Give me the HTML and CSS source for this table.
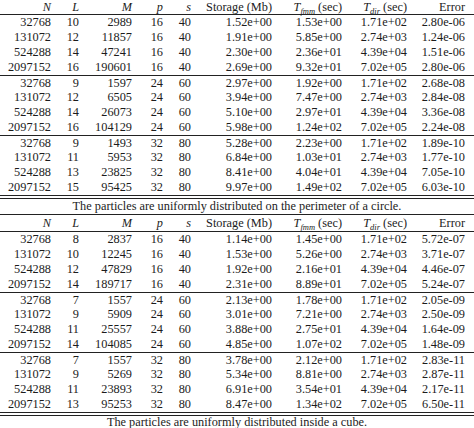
FILE: index.html
```html
<!DOCTYPE html>
<html>
<head>
<meta charset="utf-8">
<link rel="stylesheet" href="styles.css">
</head>
<body>
<div class="page">
  <section class="block first">
    <table class="data">
      <colgroup>
        <col class="c-n"><col class="c-l"><col class="c-m"><col class="c-p"><col class="c-s">
        <col class="c-st"><col class="c-tf"><col class="c-td"><col class="c-err">
      </colgroup>
      <thead>
        <tr><th><i>N</i></th><th><i>L</i></th><th><i>M</i></th><th><i>p</i></th><th><i>s</i></th><th>Storage (Mb)</th><th><i>T<sub>fmm</sub></i> (sec)</th><th><i>T<sub>dir</sub></i> (sec)</th><th>Error</th></tr>
      </thead>
      <tbody>
        <tr><td>32768</td><td>10</td><td>2989</td><td>16</td><td>40</td><td>1.52e+00</td><td>1.53e+00</td><td>1.71e+02</td><td>2.80e-06</td></tr>
        <tr><td>131072</td><td>12</td><td>11857</td><td>16</td><td>40</td><td>1.91e+00</td><td>5.85e+00</td><td>2.74e+03</td><td>1.24e-06</td></tr>
        <tr><td>524288</td><td>14</td><td>47241</td><td>16</td><td>40</td><td>2.30e+00</td><td>2.36e+01</td><td>4.39e+04</td><td>1.51e-06</td></tr>
        <tr><td>2097152</td><td>16</td><td>190601</td><td>16</td><td>40</td><td>2.69e+00</td><td>9.32e+01</td><td>7.02e+05</td><td>2.80e-06</td></tr>
      </tbody>
      <tbody>
        <tr><td>32768</td><td>9</td><td>1597</td><td>24</td><td>60</td><td>2.97e+00</td><td>1.92e+00</td><td>1.71e+02</td><td>2.68e-08</td></tr>
        <tr><td>131072</td><td>12</td><td>6505</td><td>24</td><td>60</td><td>3.94e+00</td><td>7.47e+00</td><td>2.74e+03</td><td>2.84e-08</td></tr>
        <tr><td>524288</td><td>14</td><td>26073</td><td>24</td><td>60</td><td>5.10e+00</td><td>2.97e+01</td><td>4.39e+04</td><td>3.36e-08</td></tr>
        <tr><td>2097152</td><td>16</td><td>104129</td><td>24</td><td>60</td><td>5.98e+00</td><td>1.24e+02</td><td>7.02e+05</td><td>2.24e-08</td></tr>
      </tbody>
      <tbody>
        <tr><td>32768</td><td>9</td><td>1493</td><td>32</td><td>80</td><td>5.28e+00</td><td>2.23e+00</td><td>1.71e+02</td><td>1.89e-10</td></tr>
        <tr><td>131072</td><td>11</td><td>5953</td><td>32</td><td>80</td><td>6.84e+00</td><td>1.03e+01</td><td>2.74e+03</td><td>1.77e-10</td></tr>
        <tr><td>524288</td><td>13</td><td>23825</td><td>32</td><td>80</td><td>8.41e+00</td><td>4.04e+01</td><td>4.39e+04</td><td>7.05e-10</td></tr>
        <tr><td>2097152</td><td>15</td><td>95425</td><td>32</td><td>80</td><td>9.97e+00</td><td>1.49e+02</td><td>7.02e+05</td><td>6.03e-10</td></tr>
      </tbody>
    </table>
    <p class="caption">The particles are uniformly distributed on the perimeter of a circle.</p>
  </section>
  <section class="block last">
    <table class="data">
      <colgroup>
        <col class="c-n"><col class="c-l"><col class="c-m"><col class="c-p"><col class="c-s">
        <col class="c-st"><col class="c-tf"><col class="c-td"><col class="c-err">
      </colgroup>
      <thead>
        <tr><th><i>N</i></th><th><i>L</i></th><th><i>M</i></th><th><i>p</i></th><th><i>s</i></th><th>Storage (Mb)</th><th><i>T<sub>fmm</sub></i> (sec)</th><th><i>T<sub>dir</sub></i> (sec)</th><th>Error</th></tr>
      </thead>
      <tbody>
        <tr><td>32768</td><td>8</td><td>2837</td><td>16</td><td>40</td><td>1.14e+00</td><td>1.45e+00</td><td>1.71e+02</td><td>5.72e-07</td></tr>
        <tr><td>131072</td><td>10</td><td>12245</td><td>16</td><td>40</td><td>1.53e+00</td><td>5.26e+00</td><td>2.74e+03</td><td>3.71e-07</td></tr>
        <tr><td>524288</td><td>12</td><td>47829</td><td>16</td><td>40</td><td>1.92e+00</td><td>2.16e+01</td><td>4.39e+04</td><td>4.46e-07</td></tr>
        <tr><td>2097152</td><td>14</td><td>189717</td><td>16</td><td>40</td><td>2.31e+00</td><td>8.89e+01</td><td>7.02e+05</td><td>5.24e-07</td></tr>
      </tbody>
      <tbody>
        <tr><td>32768</td><td>7</td><td>1557</td><td>24</td><td>60</td><td>2.13e+00</td><td>1.78e+00</td><td>1.71e+02</td><td>2.05e-09</td></tr>
        <tr><td>131072</td><td>9</td><td>5909</td><td>24</td><td>60</td><td>3.01e+00</td><td>7.21e+00</td><td>2.74e+03</td><td>2.50e-09</td></tr>
        <tr><td>524288</td><td>11</td><td>25557</td><td>24</td><td>60</td><td>3.88e+00</td><td>2.75e+01</td><td>4.39e+04</td><td>1.64e-09</td></tr>
        <tr><td>2097152</td><td>14</td><td>104085</td><td>24</td><td>60</td><td>4.85e+00</td><td>1.07e+02</td><td>7.02e+05</td><td>1.48e-09</td></tr>
      </tbody>
      <tbody>
        <tr><td>32768</td><td>7</td><td>1557</td><td>32</td><td>80</td><td>3.78e+00</td><td>2.12e+00</td><td>1.71e+02</td><td>2.83e-11</td></tr>
        <tr><td>131072</td><td>9</td><td>5269</td><td>32</td><td>80</td><td>5.34e+00</td><td>8.81e+00</td><td>2.74e+03</td><td>2.87e-11</td></tr>
        <tr><td>524288</td><td>11</td><td>23893</td><td>32</td><td>80</td><td>6.91e+00</td><td>3.54e+01</td><td>4.39e+04</td><td>2.17e-11</td></tr>
        <tr><td>2097152</td><td>13</td><td>95253</td><td>32</td><td>80</td><td>8.47e+00</td><td>1.34e+02</td><td>7.02e+05</td><td>6.50e-11</td></tr>
      </tbody>
    </table>
    <p class="caption">The particles are uniformly distributed inside a cube.</p>
  </section>
</div>
</body>
</html>
```

FILE: styles.css
```css
html, body {
  margin: 0;
  padding: 0;
  background: #fff;
}

body {
  font-family: "Liberation Serif", "Times New Roman", serif;
  font-size: 12.3px;
  color: #1c1c1c;
  overflow: hidden;
}

.page {
  width: 474px;
  height: 428px;
  overflow: hidden;
}

.data {
  width: 474px;
  border-collapse: separate;
  border-spacing: 0;
  table-layout: fixed;
}

.c-n { width: 51px; }
.c-l { width: 28px; }
.c-m { width: 53px; }
.c-p { width: 31px; }
.c-s { width: 28px; }
.c-st { width: 81px; }
.c-tf { width: 70px; }
.c-td { width: 65px; }
.c-err { width: 67px; }

.data th,
.data td {
  padding: 0;
  text-align: right;
  white-space: nowrap;
  line-height: 15px;
  height: 15px;
  font-weight: normal;
}

.data th:last-child,
.data td:last-child {
  padding-right: 9px;
}

.data thead th {
  border-top: 1px solid #222;
  border-bottom: 1px solid #222;
  height: 16px;
  line-height: 16px;
}

.first .data thead th {
  border-top: none;
  height: 14px;
  line-height: 13px;
}

.data tbody + tbody tr:first-child td {
  border-top: 1px solid #222;
  height: 14px;
  line-height: 14px;
}

.data tbody:last-child tr:last-child td {
  border-bottom: 4px double #222;
}

.data sub {
  font-size: 8.5px;
  line-height: 0;
  vertical-align: -3px;
}

.caption {
  margin: 0;
  height: 15px;
  line-height: 15px;
  text-align: center;
}

.last .caption {
  height: 12px;
  line-height: 12px;
}
```
